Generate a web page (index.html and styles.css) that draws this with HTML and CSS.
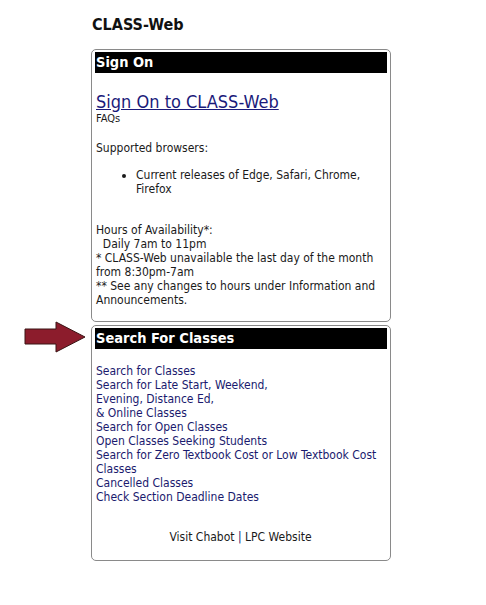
FILE: index.html
```html
<!DOCTYPE html>
<html>
<head>
<meta charset="utf-8">
<link rel="stylesheet" href="styles.css">
</head>
<body>
<div class="page">
  <h1 class="title">CLASS-Web</h1>
  <div class="box">
    <div class="box-head">Sign On</div>
    <div class="box-body">
      <a class="big-link" href="#">Sign On to CLASS-Web</a>
      <div class="small">FAQs</div>
      <p class="para">Supported browsers:</p>
      <ul class="list">
        <li>Current releases of Edge, Safari, Chrome, Firefox</li>
      </ul>
      <div class="hours">
        Hours of Availability*:<br>
        &nbsp;&nbsp;Daily 7am to 11pm<br>
        * CLASS-Web unavailable the last day of the month from 8:30pm-7am<br>
        ** See any changes to hours under Information and Announcements.
      </div>
    </div>
  </div>
  <div class="arrow-row">
    <svg class="arrow" width="64" height="34" viewBox="0 0 64 34">
      <path d="M1 8 H32 V1 L61 16 L32 31 V23 H1 Z" fill="#8c1c2c" stroke="#3a1414" stroke-width="1"/>
    </svg>
    <div class="box">
      <div class="box-head">Search For Classes</div>
      <div class="box-body">
        <div class="links">
          <a href="#">Search for Classes</a><br>
          <a href="#">Search for Late Start, Weekend,<br>Evening, Distance Ed,<br>&amp; Online Classes</a><br>
          <a href="#">Search for Open Classes</a><br>
          <a href="#">Open Classes Seeking Students</a><br>
          <a href="#">Search for Zero Textbook Cost or Low Textbook Cost Classes</a><br>
          <a href="#">Cancelled Classes</a><br>
          <a href="#">Check Section Deadline Dates</a>
        </div>
        <div class="footer-links">
          <a href="#">Visit Chabot</a> <span class="sep">|</span> <a href="#">LPC Website</a>
        </div>
      </div>
    </div>
  </div>
</div>
</body>
</html>
```

FILE: styles.css
```css
html, body {
  margin: 0;
  padding: 0;
  background: #ffffff;
}
body {
  font-family: "DejaVu Sans Condensed", "DejaVu Sans", sans-serif;
  font-size: 12px;
  line-height: 14px;
  color: #1a1a1a;
}
.page {
  margin-left: 91px;
  width: 300px;
  padding-top: 14px;
}
.title {
  margin: 0 0 0 1px;
  font-size: 16px;
  line-height: 22px;
  font-weight: bold;
  color: #111;
}
.box {
  margin-top: 13px;
  border: 1.5px solid #8a8a8a;
  border-radius: 5px;
  padding: 2px 3px 14px 3px;
  width: 300px;
  box-sizing: border-box;
}
.box-head {
  background: #000;
  color: #fff;
  font-weight: bold;
  font-size: 14.5px;
  line-height: 21px;
  padding-left: 1px;
}
.box-body {
  padding: 0 2px 0 1px;
}
.big-link {
  display: block;
  margin-top: 19px;
  font-size: 18px;
  line-height: 20px;
  color: #1a1a7a;
}
.small {
  font-size: 11px;
  line-height: 13px;
}
.para {
  margin: 16px 0 0 0;
}
.list {
  margin: 13px 0 0 0;
  padding-left: 40px;
}
.hours {
  margin-top: 27px;
}
.arrow-row {
  position: relative;
}
.arrow {
  position: absolute;
  left: -67px;
  top: -4px;
}
.arrow-row .box {
  margin-top: 3px;
  padding-bottom: 10px;
}
.links {
  margin-top: 15px;
}
.links a {
  color: #1a1a6e;
  text-decoration: none;
}
.footer-links {
  margin-top: 26px;
  text-align: center;
  padding-bottom: 6px;
}
.footer-links a {
  color: #1a1a1a;
  text-decoration: none;
}
.sep {
  color: #1a1a6e;
}
```
